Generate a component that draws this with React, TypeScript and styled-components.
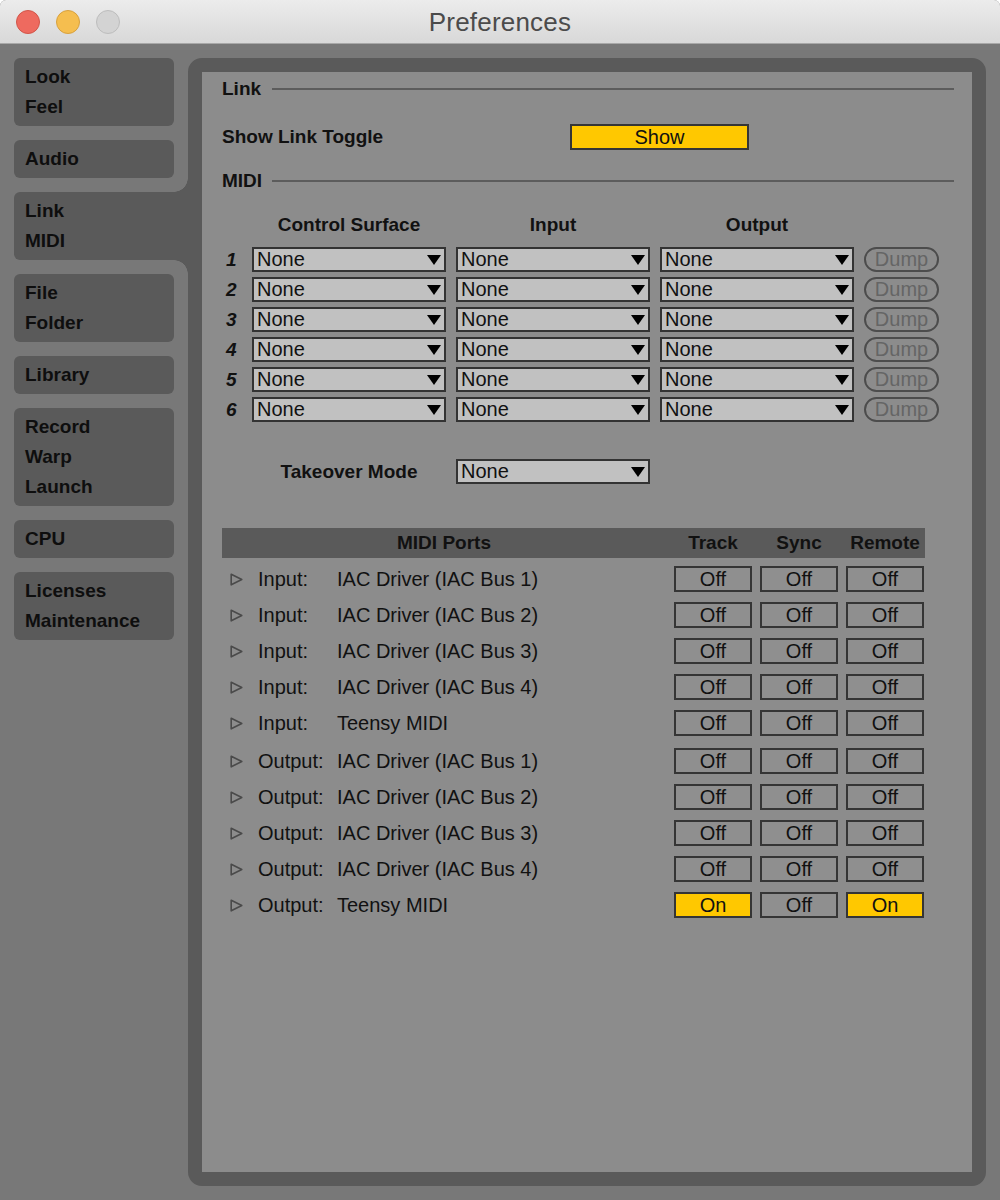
import React from "react";
import styled, { createGlobalStyle } from "styled-components";

const Global = createGlobalStyle`
  html, body { margin: 0; padding: 0; background: #ffffff; }
  body { font-family: "Liberation Sans", Arial, sans-serif; color: #111; }
  * { box-sizing: border-box; }
`;

const Window = styled.div`
  width: 1000px;
  height: 1200px;
  display: flex;
  flex-direction: column;
  background: #787878;
  border-radius: 6px 6px 0 0;
  overflow: hidden;
`;

const TitleBar = styled.div`
  height: 44px;
  flex: none;
  display: grid;
  grid-template-columns: 1fr auto 1fr;
  align-items: center;
  background: linear-gradient(#ececec, #d8d8d8);
  border-bottom: 1px solid #a8a8a8;
`;

const Lights = styled.div`
  display: flex;
  gap: 16px;
  padding-left: 16px;
`;

const Light = styled.span<{ $fill: string; $edge: string }>`
  width: 24px;
  height: 24px;
  border-radius: 50%;
  background: ${(p) => p.$fill};
  border: 1px solid ${(p) => p.$edge};
`;

const Title = styled.div`
  font-size: 26px;
  color: #4b4b4b;
  letter-spacing: 0.2px;
  padding-top: 2px;
`;

const Main = styled.div`
  flex: 1;
  display: flex;
  gap: 14px;
  padding: 14px;
  min-height: 0;
`;

const Sidebar = styled.div`
  width: 160px;
  flex: none;
  display: flex;
  flex-direction: column;
  gap: 14px;
`;

const Tab = styled.div<{ $active?: boolean }>`
  position: relative;
  background: #5a5a5a;
  border-radius: ${(p) => (p.$active ? "6px 0 0 6px" : "6px")};
  margin-right: ${(p) => (p.$active ? "-14px" : "0")};
  padding: 4px 11px;
  font-weight: bold;
  font-size: 19px;
  line-height: 30px;
  color: #0e0e0e;
  ${(p) =>
    p.$active &&
    `
    &::before, &::after {
      content: "";
      position: absolute;
      right: 0;
      width: 14px;
      height: 14px;
    }
    &::before {
      top: -14px;
      background: radial-gradient(circle at 0 0, transparent 13.5px, #5a5a5a 14px);
    }
    &::after {
      bottom: -14px;
      background: radial-gradient(circle at 0 100%, transparent 13.5px, #5a5a5a 14px);
    }
  `}
`;

const Panel = styled.div`
  flex: 1;
  border: 14px solid #5a5a5a;
  border-radius: 14px;
  background: #8c8c8c;
  padding: 0 18px 0 20px;
`;

const SectionHeader = styled.div<{ $top?: number }>`
  height: 34px;
  margin-top: ${(p) => p.$top ?? 0}px;
  display: flex;
  align-items: center;
`;

const SectionLabel = styled.div`
  width: 50px;
  font-weight: bold;
  font-size: 19px;
`;

const Rule = styled.div`
  flex: 1;
  height: 2px;
  background: #5c5c5c;
`;

const ToggleRow = styled.div`
  margin-top: 18px;
  height: 26px;
  display: grid;
  grid-template-columns: 348px 179px;
  align-items: center;
`;

const Label = styled.div<{ $center?: boolean }>`
  font-weight: bold;
  font-size: 19px;
  text-align: ${(p) => (p.$center ? "center" : "left")};
`;

const Toggle = styled.div<{ $on?: boolean }>`
  height: 26px;
  border: 2px solid #353535;
  background: ${(p) => (p.$on ? "#ffc800" : "#8f8f8f")};
  display: flex;
  align-items: center;
  justify-content: center;
  font-size: 20px;
  color: #111;
`;

const MidiGrid = styled.div<{ $top: number; $rows?: string }>`
  margin-top: ${(p) => p.$top}px;
  display: grid;
  grid-template-columns: 20px 194px 194px 194px 75px;
  column-gap: 10px;
  row-gap: 5px;
  grid-auto-rows: ${(p) => p.$rows ?? "25px"};
  align-items: center;
`;

const Num = styled.div`
  font-weight: bold;
  font-style: italic;
  font-size: 19px;
  padding-left: 4px;
`;

const Select = styled.div`
  height: 25px;
  border: 2px solid #333;
  background: #c1c1c1;
  display: flex;
  align-items: center;
  justify-content: space-between;
  padding: 0 3px 0 3px;
  font-size: 20px;
  color: #111;
`;

const Dump = styled.div`
  height: 25px;
  border: 2px solid #4c4c4c;
  border-radius: 13px;
  display: flex;
  align-items: center;
  justify-content: center;
  font-size: 20px;
  color: #656565;
`;

const Empty = styled.div``;

const Ports = styled.div`
  margin-top: 44px;
  width: 703px;
`;

const PortsHeader = styled.div`
  height: 30px;
  background: #5a5a5a;
  display: grid;
  grid-template-columns: 444px 78px 78px 78px;
  column-gap: 8px;
  align-items: center;
`;

const PortRows = styled.div`
  padding-top: 3px;
`;

const PortRow = styled.div<{ $groupStart?: boolean }>`
  height: 36px;
  margin-top: ${(p) => (p.$groupStart ? "2px" : "0")};
  display: grid;
  grid-template-columns: 444px 78px 78px 78px;
  column-gap: 8px;
  align-items: center;
`;

const PortName = styled.div`
  display: grid;
  grid-template-columns: 36px 79px 1fr;
  align-items: center;
  font-size: 20px;
  color: #111;
`;

const Expand = styled.div`
  padding-left: 8px;
  display: flex;
  align-items: center;
`;

const Arrow = () => (
  <svg width="14" height="10" viewBox="0 0 14 10">
    <polygon points="0,0 14,0 7,10" fill="#000" />
  </svg>
);

const Tri = () => (
  <svg width="13" height="13" viewBox="0 0 13 13">
    <polygon points="1.2,1.2 11.8,6.5 1.2,11.8" fill="none" stroke="#4a4a4a" strokeWidth="1.6" strokeLinejoin="round" />
  </svg>
);

const tabs: { lines: string[]; active?: boolean }[] = [
  { lines: ["Look", "Feel"] },
  { lines: ["Audio"] },
  { lines: ["Link", "MIDI"], active: true },
  { lines: ["File", "Folder"] },
  { lines: ["Library"] },
  { lines: ["Record", "Warp", "Launch"] },
  { lines: ["CPU"] },
  { lines: ["Licenses", "Maintenance"] },
];

const ports: { kind: string; name: string; track: boolean; remote: boolean }[] = [
  { kind: "Input:", name: "IAC Driver (IAC Bus 1)", track: false, remote: false },
  { kind: "Input:", name: "IAC Driver (IAC Bus 2)", track: false, remote: false },
  { kind: "Input:", name: "IAC Driver (IAC Bus 3)", track: false, remote: false },
  { kind: "Input:", name: "IAC Driver (IAC Bus 4)", track: false, remote: false },
  { kind: "Input:", name: "Teensy MIDI", track: false, remote: false },
  { kind: "Output:", name: "IAC Driver (IAC Bus 1)", track: false, remote: false },
  { kind: "Output:", name: "IAC Driver (IAC Bus 2)", track: false, remote: false },
  { kind: "Output:", name: "IAC Driver (IAC Bus 3)", track: false, remote: false },
  { kind: "Output:", name: "IAC Driver (IAC Bus 4)", track: false, remote: false },
  { kind: "Output:", name: "Teensy MIDI", track: true, remote: true },
];

const NoneSelect = () => (
  <Select>
    <span>None</span>
    <Arrow />
  </Select>
);

export default function App() {
  return (
    <>
      <Global />
      <Window>
        <TitleBar>
          <Lights>
            <Light $fill="#ee6a5f" $edge="#d25549" />
            <Light $fill="#f5be4f" $edge="#d8a13e" />
            <Light $fill="#d3d3d3" $edge="#bdbdbd" />
          </Lights>
          <Title>Preferences</Title>
          <span />
        </TitleBar>
        <Main>
          <Sidebar>
            {tabs.map((t, i) => (
              <Tab key={i} $active={t.active}>
                {t.lines.map((l) => (
                  <div key={l}>{l}</div>
                ))}
              </Tab>
            ))}
          </Sidebar>
          <Panel>
            <SectionHeader>
              <SectionLabel>Link</SectionLabel>
              <Rule />
            </SectionHeader>
            <ToggleRow>
              <Label>Show Link Toggle</Label>
              <Toggle $on>Show</Toggle>
            </ToggleRow>
            <SectionHeader $top={14}>
              <SectionLabel>MIDI</SectionLabel>
              <Rule />
            </SectionHeader>
            <MidiGrid $top={17} $rows="20px">
              <Empty />
              <Label $center>Control Surface</Label>
              <Label $center>Input</Label>
              <Label $center>Output</Label>
              <Empty />
            </MidiGrid>
            <MidiGrid $top={12}>
              {[1, 2, 3, 4, 5, 6].map((n) => (
                <React.Fragment key={n}>
                  <Num>{n}</Num>
                  <NoneSelect />
                  <NoneSelect />
                  <NoneSelect />
                  <Dump>Dump</Dump>
                </React.Fragment>
              ))}
            </MidiGrid>
            <MidiGrid $top={37}>
              <Empty />
              <Label $center>Takeover Mode</Label>
              <NoneSelect />
            </MidiGrid>
            <Ports>
              <PortsHeader>
                <Label $center>MIDI Ports</Label>
                <Label $center>Track</Label>
                <Label $center>Sync</Label>
                <Label $center>Remote</Label>
              </PortsHeader>
              <PortRows>
                {ports.map((p, i) => (
                  <PortRow key={i} $groupStart={i > 0 && p.kind !== ports[i - 1].kind}>
                    <PortName>
                      <Expand>
                        <Tri />
                      </Expand>
                      <span>{p.kind}</span>
                      <span>{p.name}</span>
                    </PortName>
                    <Toggle $on={p.track}>{p.track ? "On" : "Off"}</Toggle>
                    <Toggle>Off</Toggle>
                    <Toggle $on={p.remote}>{p.remote ? "On" : "Off"}</Toggle>
                  </PortRow>
                ))}
              </PortRows>
            </Ports>
          </Panel>
        </Main>
      </Window>
    </>
  );
}
